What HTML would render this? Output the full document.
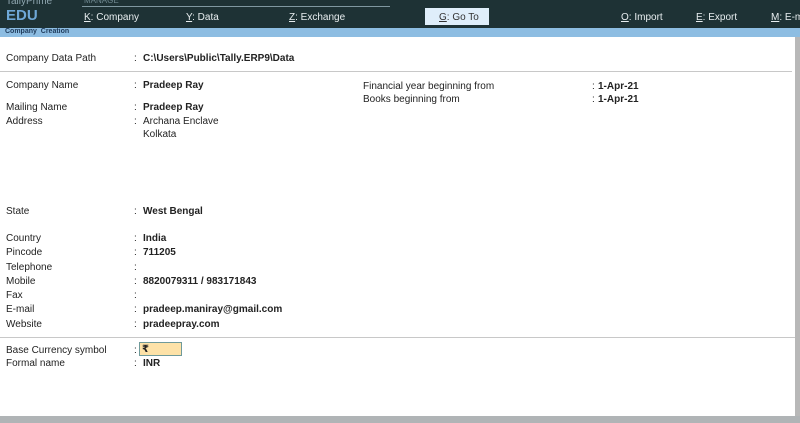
<!DOCTYPE html><html><head><style>
body{margin:0;width:800px;height:423px;overflow:hidden;background:#fff;font-family:"Liberation Sans",sans-serif;font-size:10px;color:#222;position:relative}
.a{position:absolute;white-space:nowrap;line-height:12px;margin-top:2px}
.b{font-weight:bold}
.top{position:absolute;left:0;top:0;width:800px;height:28px;background:#1e3235}
.t{position:absolute;color:#e8eef0;font-size:10px;top:12px;white-space:nowrap}
.t u{text-decoration:underline}
</style></head><body>
<div class="top"></div>
<div class="a" style="left:6px;top:-6px;color:#8fa6b0;font-size:10px">TallyPrime</div>
<div class="a" style="left:6px;top:6px;color:#6fa8d8;font-size:15px;font-weight:bold;line-height:16px">EDU</div>
<div style="position:absolute;left:82px;top:6px;width:308px;height:1px;background:#7f97a0"></div>
<div class="a" style="left:84px;top:-7px;color:#6f8890;font-size:8px">MANAGE</div>
<div class="t" style="left:84px"><u>K</u>: Company</div>
<div class="t" style="left:186px"><u>Y</u>: Data</div>
<div class="t" style="left:289px"><u>Z</u>: Exchange</div>
<div style="position:absolute;left:425px;top:8px;width:64px;height:17px;background:#dfeefa"></div>
<div class="t" style="left:439px;color:#333"><u>G</u>: Go To</div>
<div class="t" style="left:621px"><u>O</u>: Import</div>
<div class="t" style="left:696px"><u>E</u>: Export</div>
<div class="t" style="left:771px"><u>M</u>: E-m</div>
<div style="position:absolute;left:0;top:28px;width:800px;height:9px;background:#8dbde2"></div>
<div class="a b" style="left:5px;top:25px;font-size:7px;color:#1e3a5a;line-height:10px">Company &nbsp;Creation</div>
<div style="position:absolute;left:795px;top:37px;width:5px;height:380px;background:#b8b8b8"></div>
<div style="position:absolute;left:0;top:416px;width:800px;height:7px;background:#b0b4b6"></div>
<div style="position:absolute;left:0;top:71px;width:792px;height:1px;background:#c8c8c8"></div>
<div style="position:absolute;left:0;top:337px;width:795px;height:1px;background:#c8c8c8"></div>

<div class="a" style="left:6px;top:51px">Company Data Path</div><div class="a" style="left:134px;top:51px">:</div><div class="a b" style="left:143px;top:51px">C:\Users\Public\Tally.ERP9\Data</div>
<div class="a" style="left:6px;top:78px">Company Name</div><div class="a" style="left:134px;top:78px">:</div><div class="a b" style="left:143px;top:78px">Pradeep Ray</div>
<div class="a" style="left:6px;top:100px">Mailing Name</div><div class="a" style="left:134px;top:100px">:</div><div class="a b" style="left:143px;top:100px">Pradeep Ray</div>
<div class="a" style="left:6px;top:114px">Address</div><div class="a" style="left:134px;top:114px">:</div><div class="a" style="left:143px;top:114px">Archana Enclave</div>
<div class="a" style="left:143px;top:127px">Kolkata</div>
<div class="a" style="left:6px;top:204px">State</div><div class="a" style="left:134px;top:204px">:</div><div class="a b" style="left:143px;top:204px">West Bengal</div>
<div class="a" style="left:6px;top:231px">Country</div><div class="a" style="left:134px;top:231px">:</div><div class="a b" style="left:143px;top:231px">India</div>
<div class="a" style="left:6px;top:245px">Pincode</div><div class="a" style="left:134px;top:245px">:</div><div class="a b" style="left:143px;top:245px">711205</div>
<div class="a" style="left:6px;top:260px">Telephone</div><div class="a" style="left:134px;top:260px">:</div>
<div class="a" style="left:6px;top:274px">Mobile</div><div class="a" style="left:134px;top:274px">:</div><div class="a b" style="left:143px;top:274px">8820079311 / 983171843</div>
<div class="a" style="left:6px;top:288px">Fax</div><div class="a" style="left:134px;top:288px">:</div>
<div class="a" style="left:6px;top:302px">E-mail</div><div class="a" style="left:134px;top:302px">:</div><div class="a b" style="left:143px;top:302px">pradeep.maniray@gmail.com</div>
<div class="a" style="left:6px;top:317px">Website</div><div class="a" style="left:134px;top:317px">:</div><div class="a b" style="left:143px;top:317px">pradeepray.com</div>
<div class="a" style="left:6px;top:343px">Base Currency symbol</div><div class="a" style="left:134px;top:343px">:</div>
<div style="position:absolute;left:139px;top:342px;width:41px;height:12px;background:#fde2a8;border:1px solid #6f9a9a"></div>
<div class="a b" style="left:142px;top:342px;font-family:'DejaVu Sans',sans-serif">₹</div>
<div class="a" style="left:6px;top:356px">Formal name</div><div class="a" style="left:134px;top:356px">:</div><div class="a b" style="left:143px;top:356px">INR</div>
<div class="a" style="left:363px;top:79px">Financial year beginning from</div><div class="a" style="left:592px;top:79px">:</div><div class="a b" style="left:598px;top:79px">1-Apr-21</div>
<div class="a" style="left:363px;top:92px">Books beginning from</div><div class="a" style="left:592px;top:92px">:</div><div class="a b" style="left:598px;top:92px">1-Apr-21</div>
</body></html>
